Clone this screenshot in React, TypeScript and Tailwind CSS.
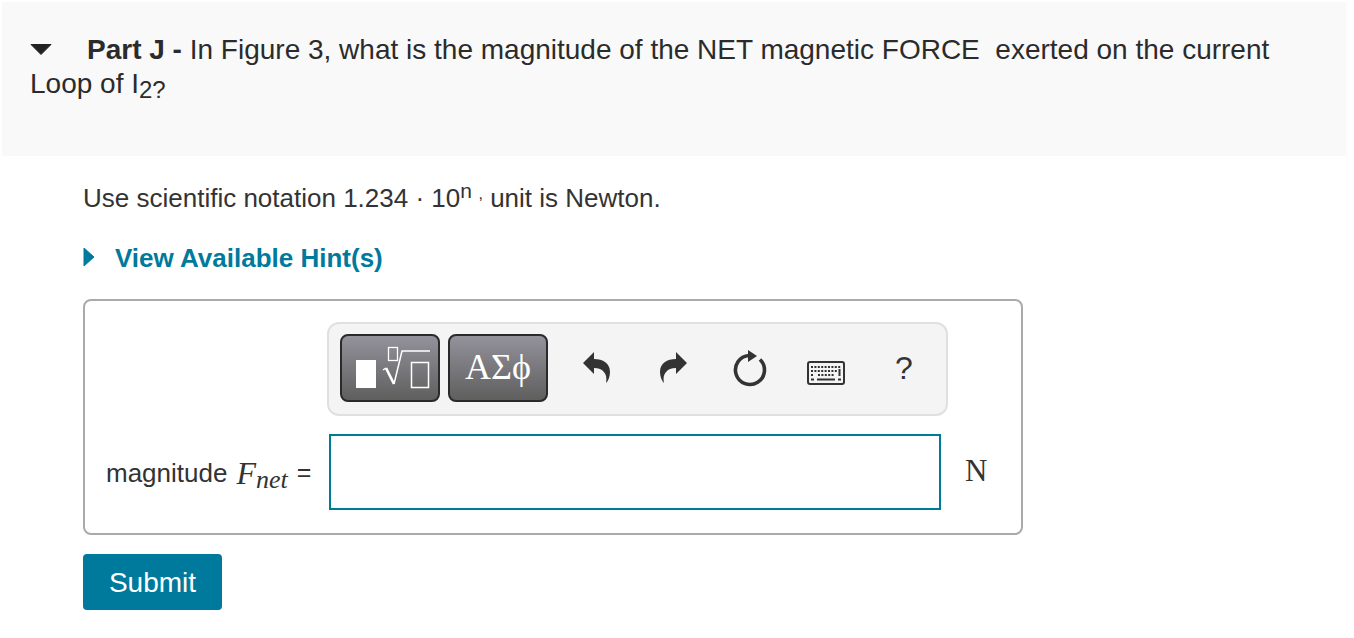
const sans = "font-['Liberation_Sans',Arial,sans-serif]"
const serif = "font-['Liberation_Serif',serif]"

const App = () => {
  return (
    <div className={`${sans} w-[1354px] h-[638px] bg-white overflow-hidden pt-[2px] pl-[2px] text-[#333]`}>
      <div className="w-[1344px] h-[154px] bg-[#f9f9f9] pt-[31px] pl-[28px] pr-[60px] text-[28px] leading-[34px] text-[#2b2b2b]">
        <span className="inline-block w-[57px] h-[20px] align-[1px]">
          <svg width="22" height="12" viewBox="0 0 22 12" className="mt-[5px]"><path d="M1 1.5h20L11 11.5z" fill="#222" stroke="#222" strokeLinejoin="round" /></svg>
        </span>
        <span className="font-bold">Part J - </span>
        <span>In Figure 3, what is the magnitude of the NET magnetic FORCE&nbsp; exerted on the current </span>
        <span>Loop of I</span>
        <span className="relative top-[5px] text-[24px]">2?</span>
      </div>

      <div className="pl-[81px]">
        <p className="mt-[26px] text-[26px] leading-[32px] h-[32px]">
          Use scientific notation 1.234 · 10<span className="text-[21px] relative -top-[9px]">n</span>
          <span className="inline-block w-[11px] text-right text-[16px] relative -top-[8px]">,</span> unit is Newton.
        </p>

        <div className="mt-[28px] h-[32px] flex items-center">
          <svg width="12" height="20" viewBox="0 0 12 20" className="mr-[20px] -mt-[2px]"><path d="M1 1v18L11 10z" fill="#007a9c" stroke="#007a9c" strokeLinejoin="round" /></svg>
          <span className="text-[26px] font-bold text-[#007a9c]">View Available Hint(s)</span>
        </div>

        <div className="mt-[25px] w-[940px] h-[236px] border-2 border-[#aaaaaa] rounded-[8px] flex flex-col">
          <div className="ml-[242px] mt-[21px] w-[621px] h-[94px] bg-[#f4f4f4] border-2 border-[#e0e0e0] rounded-[12px] pl-[11px] pt-[10px] flex">
            <div className="w-[100px] h-[68px] rounded-[8px] border-2 border-[#2a2a2a] bg-gradient-to-b from-[#94929b] to-[#5f5f5f] flex items-center justify-center">
              <svg width="84" height="54" viewBox="0 0 84 54">
                <rect x="8" y="19" width="20" height="28" fill="#fff" />
                <rect x="40.500" y="6.500" width="9" height="13" fill="none" stroke="#fff" strokeWidth="1.300" />
                <path d="M35 29l3-2" fill="none" stroke="#fff" strokeWidth="1.500" />
                <path d="M38 27l8 16" fill="none" stroke="#fff" strokeWidth="2.600" />
                <path d="M46 43l8-33h28" fill="none" stroke="#fff" strokeWidth="1.500" />
                <rect x="63.500" y="21.500" width="17" height="25" fill="none" stroke="#fff" strokeWidth="1.500" />
              </svg>
            </div>
            <div className={`${serif} ml-[8px] w-[100px] h-[68px] rounded-[8px] border-2 border-[#2a2a2a] bg-gradient-to-b from-[#94929b] to-[#5f5f5f] flex items-center justify-center text-[36px] text-white pb-[2px]`}>
              ΑΣϕ
            </div>
            <div className="ml-[35px] h-[68px] w-[30px] flex items-center">
              <svg width="30" height="32" viewBox="0 0 30 32"><path d="M0 11L11 0v7c9 0 16 4 16 13 0 5-2 9-4 11 2-9-3-15-12-15v6z" fill="#333" /></svg>
            </div>
            <div className="ml-[47px] h-[68px] w-[30px] flex items-center">
              <svg width="30" height="32" viewBox="0 0 30 32"><path d="M27 11L16 0v7C7 7 0 11 0 20c0 5 2 9 4 11-2-9 3-15 12-15v6z" fill="#333" /></svg>
            </div>
            <div className="ml-[42px] h-[68px] w-[36px] flex items-center">
              <svg width="36" height="38" viewBox="0 0 36 38">
                <path d="M17 6.500A14.500 14.500 0 1 0 28 10.500" fill="none" stroke="#333" strokeWidth="3.600" />
                <path d="M16 1l9 6-9 6z" fill="#333" />
              </svg>
            </div>
            <div className="ml-[39px] h-[68px] w-[40px] flex items-center pt-[9px]">
              <svg width="38" height="24" viewBox="0 0 38 24">
                <rect x="1" y="1" width="36" height="22" rx="2" fill="none" stroke="#333" strokeWidth="2" />
                <path d="M4 6h30M4 10h26M4 14h3M11 14h16" stroke="#333" strokeWidth="2" strokeDasharray="2 1.400" fill="none" />
                <path d="M10 18.500h18M4 18.500h3M31 18.500h3M32.500 8v7" stroke="#333" strokeWidth="2" fill="none" />
              </svg>
            </div>
            <div className="ml-[48px] h-[68px] flex items-center text-[32px] text-[#333]">?</div>
          </div>

          <div className="mt-[18px] flex items-center h-[76px]">
            <div className="w-[244px] pl-[21px] pt-[2px] flex items-center text-[26px] whitespace-nowrap">
              <span>magnitude</span>
              <span className={`${serif} ml-[9px] italic text-[32px]`}>F</span>
              <span className={`${serif} italic text-[26px] relative top-[6px]`}>net</span>
              <span className="ml-[9px] text-[25px]">=</span>
            </div>
            <div className="w-[612px] h-[76px] border-2 border-[#007a9c] bg-white"></div>
            <span className={`${serif} ml-[24px] pb-[2px] text-[31px] text-[#333]`}>N</span>
          </div>
        </div>

        <button className="mt-[19px] w-[139px] h-[56px] bg-[#007a9c] rounded-[4px] text-white text-[28px] pt-[1px]">Submit</button>
      </div>
    </div>
  )
}

export default App
